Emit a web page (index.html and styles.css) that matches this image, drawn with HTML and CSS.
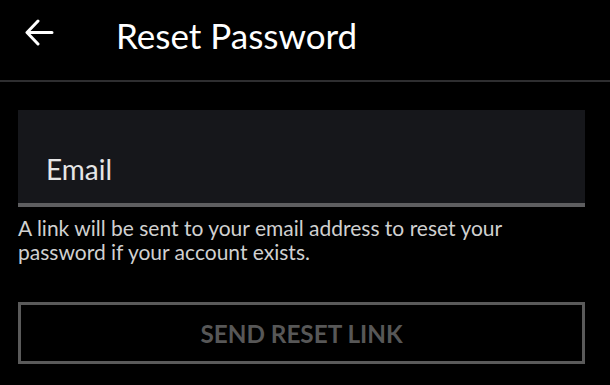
FILE: index.html
```html
<!DOCTYPE html>
<html lang="en">
<head>
	<meta charset="UTF-8">
	<title>Reset Password</title>
	<link rel="stylesheet" href="styles.css">
</head>
<body>
	<div class="header">
		<span class="back">
			<svg width="30" height="28" viewBox="0 0 30 28">
				<path d="M28 13.5H4M14 2L3 13.5L14 25" fill="none" stroke="#fff" stroke-width="3" stroke-linecap="round" stroke-linejoin="round"/>
			</svg>
		</span>
		<h1 class="title">Reset Password</h1>
	</div>
	<div class="content">
		<div class="field">
			<span class="label">Email</span>
		</div>
		<p class="hint">A link will be sent to your email address to reset your password if your account exists.</p>
		<div class="btn">SEND RESET LINK</div>
	</div>
</body>
</html>
```

FILE: styles.css
```css
body {
	margin: 0;
	background: #000;
	font-family: Lato, "Open Sans", sans-serif;
	color: #fff;
}
.header {
	display: flex;
	align-items: center;
	border-bottom: 2px solid #2e2e30;
	box-sizing: border-box;
	height: 82px;
	padding-bottom: 10px;
}
.back {
	width: 30px;
	height: 28px;
	margin-left: 24px;
	margin-top: -4px;
	display: flex;
}
.title {
	margin: 0 0 0 62px;
	font-size: 35px;
	font-weight: 400;
}
.content {
	padding: 28px 25px 0 18px;
}
.field {
	background: #16171b;
	border-bottom: 4px solid #5e5e60;
	box-sizing: border-box;
	height: 97px;
	padding: 42px 0 0 28px;
}
.label {
	font-size: 28px;
	color: #e6e6e6;
}
.hint {
	margin: 9px 0 0;
	padding-right: 40px;
	font-size: 21px;
	line-height: 24px;
	color: #d0d0d0;
}
.btn {
	margin-top: 38px;
	height: 62px;
	box-sizing: border-box;
	border: 3px solid #5a5a5a;
	display: flex;
	align-items: center;
	justify-content: center;
	font-size: 24.3px;
	font-weight: 700;
	color: #575757;
}
```
